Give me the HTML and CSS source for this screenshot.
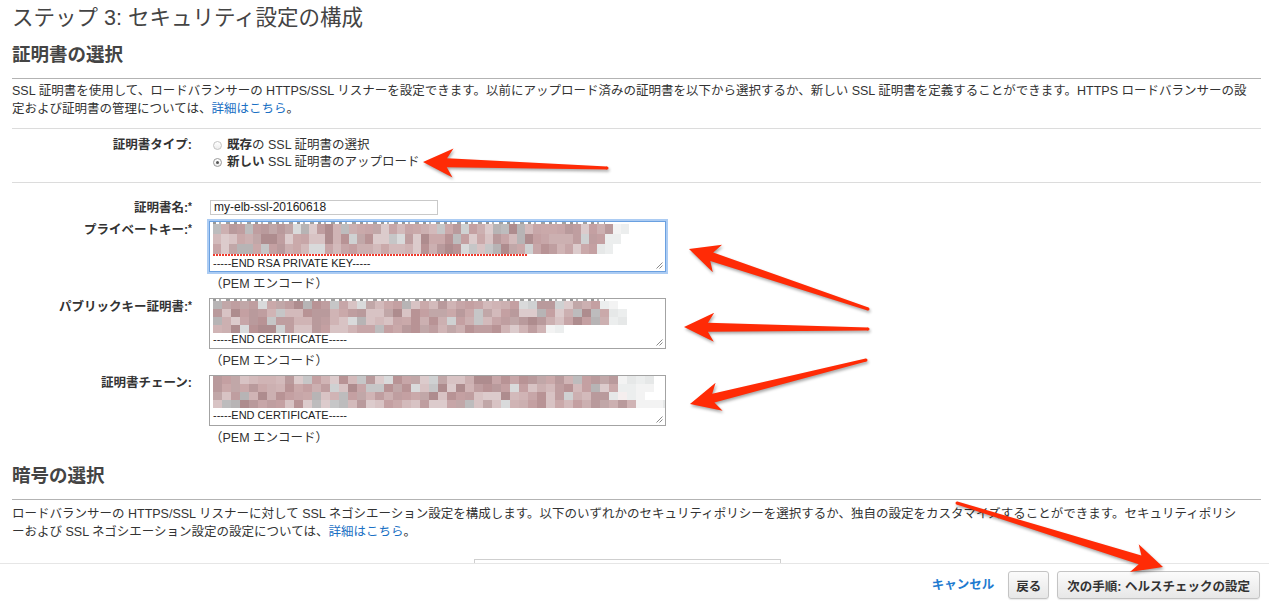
FILE: index.html
```html
<!DOCTYPE html>
<html lang="ja">
<head>
<meta charset="utf-8">
<title>ステップ 3: セキュリティ設定の構成</title>
<link rel="stylesheet" href="styles.css">
</head>
<body>
<div class="app">
  <main class="content">
    <h1 class="page-title">ステップ 3: セキュリティ設定の構成</h1>

    <section class="section">
      <h2 class="section-title">証明書の選択</h2>
      <div class="section-body">
        <p class="desc">SSL 証明書を使用して、ロードバランサーの HTTPS/SSL リスナーを設定できます。以前にアップロード済みの証明書を以下から選択するか、新しい SSL 証明書を定義することができます。HTTPS ロードバランサーの設<br>定および証明書の管理については、<a class="link" href="#">詳細はこちら</a>。</p>

        <div class="form-block cert-type">
          <div class="form-row">
            <div class="label label-radio">証明書タイプ:</div>
            <div class="control radios">
              <div class="radio"><span class="radio-dot"></span><b>既存</b>の SSL 証明書の選択</div>
              <div class="radio"><span class="radio-dot checked"></span><b>新しい</b> SSL 証明書のアップロード</div>
            </div>
          </div>
        </div>

        <div class="form-block fields">
          <div class="form-row name-row">
            <div class="label">証明書名:<span class="req">*</span></div>
            <div class="control">
              <div class="text-input">my-elb-ssl-20160618</div>
            </div>
          </div>

          <div class="form-row area-row">
            <div class="label">プライベートキー:<span class="req">*</span></div>
            <div class="control">
              <div class="textarea focused">
                <div class="peek"></div>
                <div class="mosaic mosaic-pk" data-cols="50,49,48" data-fade="2"></div>
                <div class="spell"></div>
                <div class="ta-line ta-line-pk">-----END RSA PRIVATE KEY-----</div>
                <svg class="grip" width="7" height="7" viewBox="0 0 7 7"><path d="M6.5 0.5 L0.5 6.5 M6.5 3.5 L3.5 6.5" stroke="#8a8a8a" stroke-width="1" fill="none"/></svg>
              </div>
              <div class="hint">（PEM エンコード）</div>
            </div>
          </div>

          <div class="form-row area-row">
            <div class="label">パブリックキー証明書:<span class="req">*</span></div>
            <div class="control">
              <div class="textarea">
                <div class="peek"></div>
                <div class="mosaic mosaic-cert" data-cols="43,44,44,37" data-fade="2"></div>
                <div class="ta-line">-----END CERTIFICATE-----</div>
                <svg class="grip" width="7" height="7" viewBox="0 0 7 7"><path d="M6.5 0.5 L0.5 6.5 M6.5 3.5 L3.5 6.5" stroke="#8a8a8a" stroke-width="1" fill="none"/></svg>
              </div>
              <div class="hint">（PEM エンコード）</div>
            </div>
          </div>

          <div class="form-row area-row">
            <div class="label">証明書チェーン:</div>
            <div class="control">
              <div class="textarea">
                <div class="mosaic mosaic-chain" data-cols="45,45,44,47" data-fade="4"></div>
                <div class="ta-line ta-line-chain">-----END CERTIFICATE-----</div>
                <svg class="grip" width="7" height="7" viewBox="0 0 7 7"><path d="M6.5 0.5 L0.5 6.5 M6.5 3.5 L3.5 6.5" stroke="#8a8a8a" stroke-width="1" fill="none"/></svg>
              </div>
              <div class="hint">（PEM エンコード）</div>
            </div>
          </div>
        </div>
      </div>
    </section>

    <section class="section section-cipher">
      <h2 class="section-title">暗号の選択</h2>
      <div class="section-body">
        <p class="desc">ロードバランサーの HTTPS/SSL リスナーに対して SSL ネゴシエーション設定を構成します。以下のいずれかのセキュリティポリシーを選択するか、独自の設定をカスタマイズすることができます。セキュリティポリシ<br>ーおよび SSL ネゴシエーション設定の設定については、<a class="link" href="#">詳細はこちら</a>。</p>
        <div class="policy-box"></div>
      </div>
    </section>
  </main>

  <footer class="footer">
    <a class="cancel" href="#">キャンセル</a>
    <button class="btn btn-back" type="button">戻る</button>
    <button class="btn btn-next" type="button">次の手順: ヘルスチェックの設定</button>
  </footer>
</div>

<svg class="arrows" width="1269" height="609" viewBox="0 0 1269 609"></svg>

<script src="script.js"></script>
</body>
</html>
```

FILE: styles.css
```css
* {
  box-sizing: border-box;
}

html,
body {
  margin: 0;
  height: 100%;
}

body {
  font-family: "Liberation Sans", "Noto Sans CJK JP", sans-serif;
  font-size: 12.5px;
  color: #333;
  background: #fff;
  overflow: hidden;
}

.app {
  height: 100vh;
  display: flex;
  flex-direction: column;
}

.content {
  flex: 1;
  min-height: 0;
  overflow: hidden;
  padding: 5px 8px 0 12px;
}

.page-title {
  margin: 0;
  font-size: 21.5px;
  line-height: 26px;
  font-weight: normal;
  color: #444;
}

.section-title {
  margin: 13px 0 0;
  font-size: 18.5px;
  line-height: 22px;
  font-weight: bold;
  color: #444;
}

.section-cipher .section-title {
  margin-top: 19px;
}

.section-body {
  margin-top: 12px;
  border-top: 1px solid #b3b3b3;
}

.desc {
  margin: 0;
  padding: 3px 0 10px;
  line-height: 18px;
  color: #333;
}

.section-cipher .desc {
  padding-top: 5px;
}

.link {
  color: #1a70c4;
  text-decoration: none;
}

.form-block {
  border-top: 1px solid #dcdcdc;
}

.cert-type {
  padding: 8px 0 11px;
}

.fields {
  padding-top: 16px;
}

.form-row {
  display: flex;
  align-items: flex-start;
}

.label {
  flex: none;
  width: 180px;
  text-align: right;
  font-weight: bold;
  line-height: 16px;
  color: #333;
}

.label-radio {
  line-height: 17px;
}

.req {
  font-size: 10px;
  vertical-align: 2px;
}

.control {
  margin-left: 18px;
}

.radios {
  line-height: 17px;
}

.radio {
  white-space: nowrap;
}

.radio b {
  font-weight: bold;
}

.radio-dot {
  display: inline-block;
  position: relative;
  width: 9px;
  height: 9px;
  margin: 0 5px 0 3px;
  vertical-align: -1px;
  border: 1px solid #c3c3c3;
  border-radius: 50%;
  background: linear-gradient(#ffffff, #ececec);
}

.radio-dot.checked {
  border-color: #9a9a9a;
}

.radio-dot.checked::after {
  content: "";
  position: absolute;
  left: 2px;
  top: 2px;
  width: 3px;
  height: 3px;
  border-radius: 50%;
  background: #555;
}

.name-row {
  align-items: center;
}

.text-input {
  width: 228px;
  height: 15px;
  border: 1px solid #c9c9c9;
  padding: 0 3px;
  font-size: 12px;
  line-height: 13px;
  color: #222;
}

.area-row {
  margin-top: 6px;
}

.name-row + .area-row {
  margin-top: 5px;
}

.textarea {
  position: relative;
  width: 457px;
  height: 51px;
  margin-left: -1px;
  padding: 0 0 0 3px;
  border: 1px solid #a3a3a3;
  background: #fff;
  overflow: hidden;
}

.textarea.focused {
  border-color: #6aa0e0;
  box-shadow: 0 0 0 2px #acccf3;
}

.peek {
  width: 392px;
  height: 2px;
  opacity: 0.55;
  background: repeating-linear-gradient(90deg, #444 0 3px, transparent 3px 6px, #777 6px 8px, transparent 8px 13px, #555 13px 17px, transparent 17px 21px);
}

.mosaic-row {
  display: flex;
}

.mosaic-cell {
  flex: none;
}

.mosaic-pk .mosaic-cell {
  width: 8px;
  height: 10px;
}

.mosaic-cert .mosaic-cell {
  width: 9px;
  height: 8px;
}

.mosaic-chain .mosaic-cell {
  width: 9px;
  height: 8px;
}

.spell {
  width: 315px;
  height: 2px;
  background: repeating-linear-gradient(90deg, #ee3b2e 0 2px, transparent 2px 3px);
}

.ta-line {
  font-size: 11px;
  line-height: 13px;
  color: #222;
  white-space: nowrap;
}

.ta-line-pk,
.ta-line-chain {
  margin-top: 1px;
}

.grip {
  position: absolute;
  right: 2px;
  bottom: 2px;
}

.hint {
  margin-top: 4px;
  line-height: 16px;
  color: #333;
}

.policy-box {
  width: 307px;
  height: 40px;
  margin: 8px 0 0 462px;
  border: 1px solid #cfcfcf;
  background: #fff;
}

.footer {
  flex: none;
  height: 46px;
  border-top: 1px solid #e6e6e6;
  display: flex;
  justify-content: flex-end;
  align-items: flex-start;
  padding: 7px 9px 0 0;
}

.cancel {
  margin-right: 14px;
  line-height: 28px;
  font-weight: bold;
  color: #1f7bd0;
  text-decoration: none;
}

.btn {
  height: 28px;
  font-family: "Liberation Sans", "Noto Sans CJK JP", sans-serif;
  font-size: 12.5px;
  font-weight: bold;
  color: #333;
  border: 1px solid #c4c4c4;
  border-radius: 3px;
  background: linear-gradient(#fbfbfb, #e7e7e7);
  box-shadow: 0 1px 1px rgba(0, 0, 0, 0.08);
  cursor: pointer;
}

.btn-back {
  padding: 0 7px;
  margin-right: 8px;
}

.btn-next {
  padding: 0 9px;
}

.arrows {
  position: fixed;
  left: 0;
  top: 0;
  pointer-events: none;
  filter: drop-shadow(1px 2px 1.5px rgba(0, 0, 0, 0.35));
}

.arrow {
  fill: #ff2b06;
}
```

FILE: script.js
```js
(function () {
  function makeRng(seed) {
    var s = seed % 2147483647;
    if (s <= 0) s += 2147483646;
    return function () {
      s = (s * 16807) % 2147483647;
      return (s - 1) / 2147483646;
    };
  }

  var pinks = ['#c7a6a8', '#bf9ea0', '#d0b4b5', '#b89395', '#caa9aa', '#d8c3c4',
    '#c4a0a2', '#b99a9c', '#d3babb', '#c1a7a8', '#ae8c8e', '#ccb0b1', '#dccbcc'];
  var grays = ['#c6c6c7', '#cfd1d2', '#bdbcbd', '#d9dadb', '#b7b4b5'];
  var fades = ['#eceeee', '#f3f3f3', '#e6e8e8', '#f5eeee'];

  function pick(list, rnd) {
    return list[Math.floor(rnd() * list.length)];
  }

  var mosaics = document.querySelectorAll('.mosaic');
  for (var i = 0; i < mosaics.length; i++) {
    var m = mosaics[i];
    var counts = m.getAttribute('data-cols').split(',');
    var fade = +(m.getAttribute('data-fade') || 0);
    var rnd = makeRng(9301 + i * 4999);
    for (var r = 0; r < counts.length; r++) {
      var n = +counts[r];
      var row = document.createElement('div');
      row.className = 'mosaic-row';
      for (var j = 0; j < n + fade; j++) {
        var cell = document.createElement('span');
        cell.className = 'mosaic-cell';
        var col;
        if (j >= n) col = pick(fades, rnd);
        else if (rnd() < 0.14) col = pick(grays, rnd);
        else col = pick(pinks, rnd);
        cell.style.backgroundColor = col;
        row.appendChild(cell);
      }
      m.appendChild(row);
    }
  }

  var arrows = [
    [607, 168, 423, 162],
    [868, 309, 689, 249],
    [868, 329, 684, 327],
    [866, 360, 690, 404],
    [957, 503, 1163, 567]
  ];
  var svg = document.querySelector('.arrows');
  var NS = 'http://www.w3.org/2000/svg';
  arrows.forEach(function (a) {
    var tx = a[0], ty = a[1], px = a[2], py = a[3];
    var dx = px - tx, dy = py - ty;
    var len = Math.sqrt(dx * dx + dy * dy);
    var ux = dx / len, uy = dy / len;
    var nx = -uy, ny = ux;
    var L = 30, H = 14.5, Ln = 24, w1 = 4.5, w0 = 1.5;
    var pts = [
      [tx + nx * w0, ty + ny * w0],
      [px - ux * Ln + nx * w1, py - uy * Ln + ny * w1],
      [px - ux * L + nx * H, py - uy * L + ny * H],
      [px, py],
      [px - ux * L - nx * H, py - uy * L - ny * H],
      [px - ux * Ln - nx * w1, py - uy * Ln - ny * w1],
      [tx - nx * w0, ty - ny * w0]
    ];
    var poly = document.createElementNS(NS, 'polygon');
    poly.setAttribute('points', pts.map(function (p) {
      return p[0].toFixed(1) + ',' + p[1].toFixed(1);
    }).join(' '));
    poly.setAttribute('class', 'arrow');
    svg.appendChild(poly);
    var cap = document.createElementNS(NS, 'circle');
    cap.setAttribute('cx', tx);
    cap.setAttribute('cy', ty);
    cap.setAttribute('r', w0);
    cap.setAttribute('class', 'arrow');
    svg.appendChild(cap);
  });
})();
```
